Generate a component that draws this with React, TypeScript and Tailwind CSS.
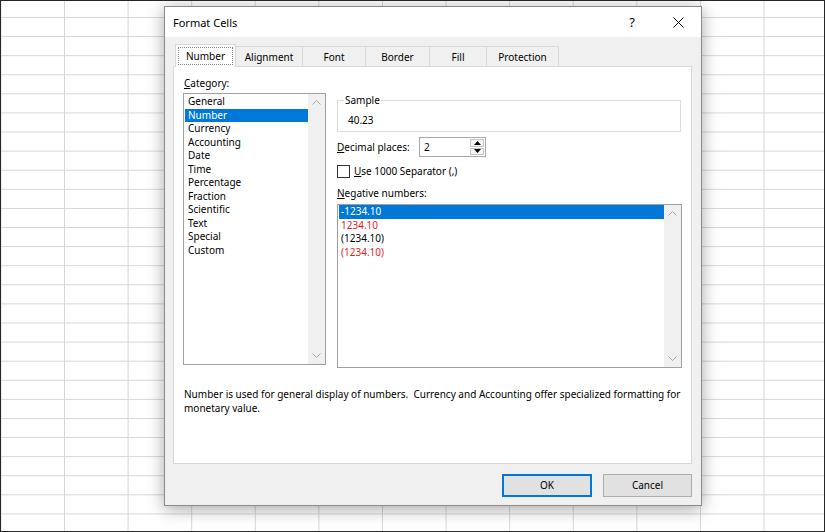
const tabs = ["Number", "Alignment", "Font", "Border", "Fill", "Protection"];

const tabWidths: Record<string, string> = {
  Number: "w-[61px]",
  Alignment: "w-[68px]",
  Font: "w-[64px]",
  Border: "w-[65px]",
  Fill: "w-[58px]",
  Protection: "w-[73px]",
};

const categories = [
  "General",
  "Number",
  "Currency",
  "Accounting",
  "Date",
  "Time",
  "Percentage",
  "Fraction",
  "Scientific",
  "Text",
  "Special",
  "Custom",
];

const negatives = [
  { label: "-1234.10", red: false },
  { label: "1234.10", red: true },
  { label: "(1234.10)", red: false },
  { label: "(1234.10)", red: true },
];

function Chevron({ up }: { up?: boolean }) {
  return (
    <svg width="9" height="5" viewBox="0 0 9 5" className="text-[#a6a6a6]">
      <polyline
        points={up ? "0.5,4.5 4.5,0.5 8.5,4.5" : "0.5,0.5 4.5,4.5 8.5,0.5"}
        fill="none"
        stroke="currentColor"
        strokeWidth="1"
      />
    </svg>
  );
}

function ScrollTrack() {
  return (
    <div className="flex w-[17px] flex-col items-center justify-between bg-[#f0f0f0] py-[6px]">
      <Chevron up />
      <Chevron />
    </div>
  );
}

function FormatCellsDialog() {
  return (
    <div className="absolute left-[163px] top-[5px] flex h-[500px] w-[538px] flex-col border border-[#8a8a8a] bg-[#f0f0f0] font-['Noto_Sans',sans-serif] text-[10px] leading-[15px] text-black shadow-[0_3px_16px_rgba(0,0,0,0.35)]">
      {/* title bar */}
      <div className="flex h-[30px] items-center justify-between bg-white">
        <span className="pl-2 pt-px text-[11px]">Format Cells</span>
        <div className="flex h-full">
          <div className="grid w-[46px] place-items-center text-[13px]">?</div>
          <div className="grid w-[46px] place-items-center">
            <svg width="11" height="11" viewBox="0 0 11 11">
              <path d="M0.5 0.5L10.5 10.5M10.5 0.5L0.5 10.5" stroke="#000" strokeWidth="1" />
            </svg>
          </div>
        </div>
      </div>

      <div className="flex flex-1 flex-col pl-2 pr-[9px] pt-[7px]">
        {/* tabs */}
        <div className="flex h-[22px] items-end pl-[2px]">
          {tabs.map((tab) =>
            tab === "Number" ? (
              <div
                key={tab}
                className={`relative z-10 -mb-px flex h-[23px] items-center justify-center border border-b-0 border-[#d9d9d9] bg-white px-[2px] ${tabWidths[tab]}`}
              >
                <span className="flex h-[18px] w-full items-center justify-center border border-dotted border-[#8a8a8a]">
                  {tab}
                </span>
              </div>
            ) : (
              <div
                key={tab}
                className={`-ml-px flex h-[20px] items-center justify-center border border-b-0 border-[#d9d9d9] bg-[#f0f0f0] pt-px ${tabWidths[tab]}`}
              >
                {tab}
              </div>
            )
          )}
        </div>

        {/* panel */}
        <div className="flex h-[398px] flex-col border border-[#d9d9d9] bg-white pl-[9px] pr-[9px] pt-[9px]">
          <div className="flex gap-[11px]">
            {/* category column */}
            <div className="flex w-[143px] flex-col">
              <span className="pl-px">
                <u>C</u>ategory:
              </span>
              <div className="mt-[2px] flex h-[272px] border border-[#a0a0a0] bg-white">
                <div className="flex flex-1 flex-col pl-px pt-px">
                  {categories.map((c) => (
                    <div
                      key={c}
                      className={`flex h-[13.5px] items-center pl-[3px] ${
                        c === "Number" ? "bg-[#0078d7] text-white" : ""
                      }`}
                    >
                      {c}
                    </div>
                  ))}
                </div>
                <ScrollTrack />
              </div>
            </div>

            {/* options column */}
            <div className="flex w-[345px] flex-col pt-[17px]">
              <fieldset className="mr-px border border-[#dcdcdc] pb-[3px] pl-[6px]">
                <legend className="-mt-[2px] px-px">Sample</legend>
                <div className="mt-[5px] pl-[4px]">40.23</div>
              </fieldset>

              <div className="mt-[5px] flex h-[20px] items-center">
                <span className="w-[82px] whitespace-nowrap">
                  <u>D</u>ecimal places:
                </span>
                <div className="flex h-[20px] w-[67px] border border-[#a8a8a8] bg-white">
                  <span className="flex flex-1 items-center pl-[4px]">2</span>
                  <div className="flex w-[16px] flex-col gap-px p-px">
                    <div className="grid flex-1 place-items-center border border-[#c4c4c4] bg-[#f4f4f4]">
                      <svg width="7" height="4" viewBox="0 0 7 4">
                        <path d="M0 4L3.5 0L7 4Z" fill="#000" />
                      </svg>
                    </div>
                    <div className="grid flex-1 place-items-center border border-[#c4c4c4] bg-[#f4f4f4]">
                      <svg width="7" height="4" viewBox="0 0 7 4">
                        <path d="M0 0L3.5 4L7 0Z" fill="#000" />
                      </svg>
                    </div>
                  </div>
                </div>
              </div>

              <label className="mt-[7px] flex h-[14px] items-center gap-[4px]">
                <span className="h-[13px] w-[13px] border border-[#333] bg-white" />
                <span>
                  <u>U</u>se 1000 Separator (,)
                </span>
              </label>

              <span className="mt-[8px]">
                <u>N</u>egative numbers:
              </span>
              <div className="mt-[3px] flex h-[164px] border border-[#a0a0a0] bg-white">
                <div className="flex flex-1 flex-col pl-px">
                  {negatives.map((n, i) => (
                    <div
                      key={i}
                      className={`flex h-[13.6px] items-center pl-[2px] ${
                        i === 0 ? "bg-[#0078d7] text-white" : n.red ? "text-[#e81c1c]" : ""
                      }`}
                    >
                      {n.label}
                    </div>
                  ))}
                </div>
                <ScrollTrack />
              </div>
            </div>
          </div>

          <p className="mt-[20px] whitespace-pre pl-px leading-[13.5px]">
            Number is used for general display of numbers.  Currency and Accounting offer specialized formatting for
            {"\n"}monetary value.
          </p>
        </div>

        {/* buttons */}
        <div className="flex justify-end gap-[11px] pt-[10px]">
          <button className="h-[23px] w-[90px] border-2 border-[#0078d7] bg-[#e1e1e1]">OK</button>
          <button className="h-[23px] w-[89px] border border-[#adadad] bg-[#e1e1e1]">Cancel</button>
        </div>
      </div>
    </div>
  );
}

export default function App() {
  return (
    <div className="relative h-[532px] w-[825px] overflow-hidden border border-[#262626] bg-white bg-[linear-gradient(to_right,#d6d6d6_1px,transparent_1px),linear-gradient(to_bottom,#d6d6d6_1px,transparent_1px)] bg-[size:63.6px_19.1px] bg-[position:63px_16px]">
      <FormatCellsDialog />
    </div>
  );
}
